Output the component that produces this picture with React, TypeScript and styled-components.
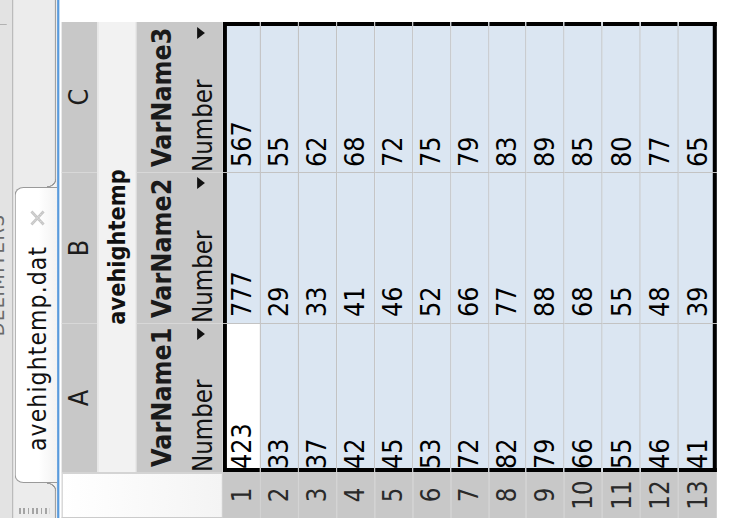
import React from 'react';
import styled, { createGlobalStyle } from 'styled-components';

const Global = createGlobalStyle`
  html, body { margin: 0; padding: 0; overflow: hidden; background: #ffffff; }
  body { width: 730px; height: 518px; font-family: "DejaVu Sans", "Liberation Sans", sans-serif; }
  #root { width: 730px; height: 518px; overflow: hidden; }
`;

/* The whole tool is laid out upright, then turned a quarter to the left. */
const Stage = styled.div`
  width: 518px;
  height: 651.8px;
  transform-origin: 0 0;
  transform: translateY(518px) rotate(-90deg) scale(1, 1.12);
  display: flex;
  flex-direction: column;
  background: #ffffff;
  font-family: "DejaVu Sans", "Liberation Sans", sans-serif;
`;

const DelimStrip = styled.div`
  flex-shrink: 0;
  height: 11.6px;
  box-sizing: border-box;
  border-bottom: 1px solid #a9a9a9;
  background: #e3e3e3;
  display: flex;
  overflow: hidden;
`;

const DelimLabelArea = styled.div`
  flex: 1;
  display: flex;
  justify-content: center;
  padding-right: 7px;
`;

const DelimLabel = styled.span`
  font-size: 18px;
  line-height: 18px;
  height: 18px;
  margin-top: -10.7px;
  letter-spacing: 1.5px;
  color: #6a6a6a;
  white-space: nowrap;
`;

const DelimSep = styled.div`
  width: 1px;
  height: 6px;
  background: #b2b2b2;
`;

const DelimTail = styled.div`
  width: 24px;
`;

const TabStrip = styled.div`
  flex-shrink: 0;
  height: 39.7px;
  background: #ececec;
  display: flex;
  flex-direction: column;
`;

const TabRow = styled.div`
  height: 38.4px;
  box-sizing: border-box;
  border-bottom: 1px solid #a2a2a2;
  display: flex;
  align-items: flex-end;
  padding-left: 4px;
`;

const Grip = styled.div`
  width: 6px;
  height: 27px;
  align-self: center;
  margin-right: 25px;
  background: repeating-linear-gradient(to bottom, #a4a4a4 0 1.5px, transparent 1.5px 3.84px);
`;

const Tab = styled.div`
  position: relative;
  z-index: 1;
  box-sizing: border-box;
  width: 296px;
  height: 37.9px;
  margin-bottom: -2.3px;
  border: 1px solid #9a9a9a;
  border-bottom: none;
  border-radius: 8px 8px 0 0;
  background: linear-gradient(#ffffff, #ffffff 55%, #f2f2f2);
  display: flex;
  align-items: center;
  padding: 1px 0 0 31px;

  &::before,
  &::after {
    content: '';
    position: absolute;
    bottom: 1.3px;
    width: 8px;
    height: 8px;
  }
  &::before {
    left: -9px;
    background: radial-gradient(circle at 0 0, transparent 7px, #9a9a9a 7.3px, #9a9a9a 8px, #f3f3f3 8.6px);
  }
  &::after {
    right: -9px;
    background: radial-gradient(circle at 100% 0, transparent 7px, #9a9a9a 7.3px, #9a9a9a 8px, #f3f3f3 8.6px);
  }
`;

const TabLabel = styled.span`
  font-size: 22px;
  letter-spacing: 1.1px;
  color: #111111;
  white-space: nowrap;
`;

const CloseIcon = styled.svg`
  margin-left: 19px;
  flex-shrink: 0;
`;

const BlueLine = styled.div`
  flex-shrink: 0;
  height: 1.4px;
  background: #5a9bdc;
`;

const Grid = styled.div`
  margin-top: 2.7px;
  width: 496px;
  display: grid;
  grid-template-columns: 46px 149px 151px 150px;
  grid-template-rows: 32.1px 34.8px 76.8px repeat(13, 33.93px);
`;

const Corner = styled.div`
  grid-row: 1 / 4;
  grid-column: 1;
  box-sizing: border-box;
  border: 1px solid #cbcbcb;
  border-right: 2px solid #d4d4d4;
  background: linear-gradient(to bottom, #ffffff, #f4f4f4);
`;

const LetterCell = styled.div<{ $last?: boolean }>`
  background: #c8c8c8;
  box-sizing: border-box;
  border-right: ${(p) => (p.$last ? 'none' : '1px solid #d8d8d8')};
  display: flex;
  align-items: center;
  justify-content: center;
  font-size: 24px;
  color: #1c1c1c;
`;

const TitleCell = styled.div`
  grid-column: 2 / 5;
  box-sizing: border-box;
  background: #f2f2f2;
  border-top: 1px solid #e3e3e3;
  border-bottom: 1px solid #e3e3e3;
  display: flex;
  align-items: center;
  justify-content: center;
  font-size: 21px;
  font-weight: bold;
  color: #111111;
`;

const HeaderCell = styled.div<{ $last?: boolean }>`
  background: #c8c8c8;
  box-sizing: border-box;
  border-right: ${(p) => (p.$last ? 'none' : '1px solid #d8d8d8')};
  padding: 10.6px ${(p) => (p.$last ? '5px' : '4px')} 0 0;
  display: flex;
  flex-direction: column;
  overflow: hidden;
`;

const VarName = styled.div`
  font-size: 24px;
  line-height: 24px;
  font-weight: bold;
  margin-left: 5px;
  color: #1a1a1a;
  white-space: nowrap;
`;

const TypeRow = styled.div`
  margin-top: 12.9px;
  height: 23px;
  display: flex;
  align-items: center;
  justify-content: space-between;
`;

const TypeLabel = styled.span`
  font-size: 23px;
  line-height: 23px;
  color: #111111;
`;

const Arrow = styled.span`
  width: 0;
  height: 0;
  margin-top: -3px;
  border-left: 6.5px solid transparent;
  border-right: 6.5px solid transparent;
  border-top: 7.5px solid #111111;
`;

const RowNum = styled.div<{ $last?: boolean }>`
  background: #c8c8c8;
  box-sizing: border-box;
  border-bottom: ${(p) => (p.$last ? 'none' : '1px solid #d4d4d4')};
  display: flex;
  align-items: center;
  justify-content: center;
  font-size: 23px;
  color: #2a2a2a;
`;

const PAD = [3, 6, 5];

const DataCell = styled.div<{ $col: number; $row: number; $active?: boolean }>`
  box-sizing: border-box;
  background: ${(p) => (p.$active ? '#ffffff' : '#dbe6f2')};
  border-right: ${(p) => (p.$col < 2 ? '1px solid #c3c3c3' : 'none')};
  border-bottom: ${(p) => (p.$row < 12 ? '1px solid #c3c3c3' : 'none')};
  box-shadow: ${(p) =>
    [
      p.$row === 0 ? 'inset 0 3.6px 0 #000' : '',
      p.$row === 12 ? 'inset 0 -3.6px 0 #000' : '',
      p.$col === 0 ? 'inset 4px 0 0 #000' : '',
      p.$col === 2 ? 'inset -4px 0 0 #000' : '',
    ]
      .filter(Boolean)
      .join(', ') || 'none'};
  padding-left: ${(p) => PAD[p.$col]}px;
  display: flex;
  align-items: center;
  font-size: 24px;
  color: #000000;
`;

const ROWS: number[][] = [
  [423, 777, 567],
  [33, 29, 55],
  [37, 33, 62],
  [42, 41, 68],
  [45, 46, 72],
  [53, 52, 75],
  [72, 66, 79],
  [82, 77, 83],
  [79, 88, 89],
  [66, 68, 85],
  [55, 55, 80],
  [46, 48, 77],
  [41, 39, 65],
];

const COLS = ['A', 'B', 'C'];

export default function App() {
  return (
    <>
      <Global />
      <Stage>
        <DelimStrip>
          <DelimLabelArea>
            <DelimLabel>DELIMITERS</DelimLabel>
          </DelimLabelArea>
          <DelimSep />
          <DelimTail />
        </DelimStrip>
        <TabStrip>
          <TabRow>
            <Grip />
            <Tab>
              <TabLabel>avehightemp.dat</TabLabel>
              <CloseIcon width="18" height="15" viewBox="0 0 18 18" preserveAspectRatio="none">
                <path d="M3.5 3.5 L14.5 14.5 M14.5 3.5 L3.5 14.5" stroke="#c6c6c6" strokeWidth="3" strokeLinecap="square" fill="none" />
                <path d="M3.5 3.5 L14.5 14.5 M14.5 3.5 L3.5 14.5" stroke="#e2e2e2" strokeWidth="1" strokeDasharray="1.5 1.5" fill="none" />
              </CloseIcon>
            </Tab>
          </TabRow>
        </TabStrip>
        <BlueLine />
        <Grid>
          <Corner />
          {COLS.map((c, i) => (
            <LetterCell key={c} $last={i === 2}>
              {c}
            </LetterCell>
          ))}
          <TitleCell>avehightemp</TitleCell>
          {COLS.map((c, i) => (
            <HeaderCell key={c} $last={i === 2}>
              <VarName>VarName{i + 1}</VarName>
              <TypeRow>
                <TypeLabel>Number</TypeLabel>
                <Arrow />
              </TypeRow>
            </HeaderCell>
          ))}
          {ROWS.map((row, r) => (
            <React.Fragment key={r}>
              <RowNum $last={r === 12}>{r + 1}</RowNum>
              {row.map((v, c) => (
                <DataCell key={c} $col={c} $row={r} $active={r === 0 && c === 0}>
                  {v}
                </DataCell>
              ))}
            </React.Fragment>
          ))}
        </Grid>
      </Stage>
    </>
  );
}
